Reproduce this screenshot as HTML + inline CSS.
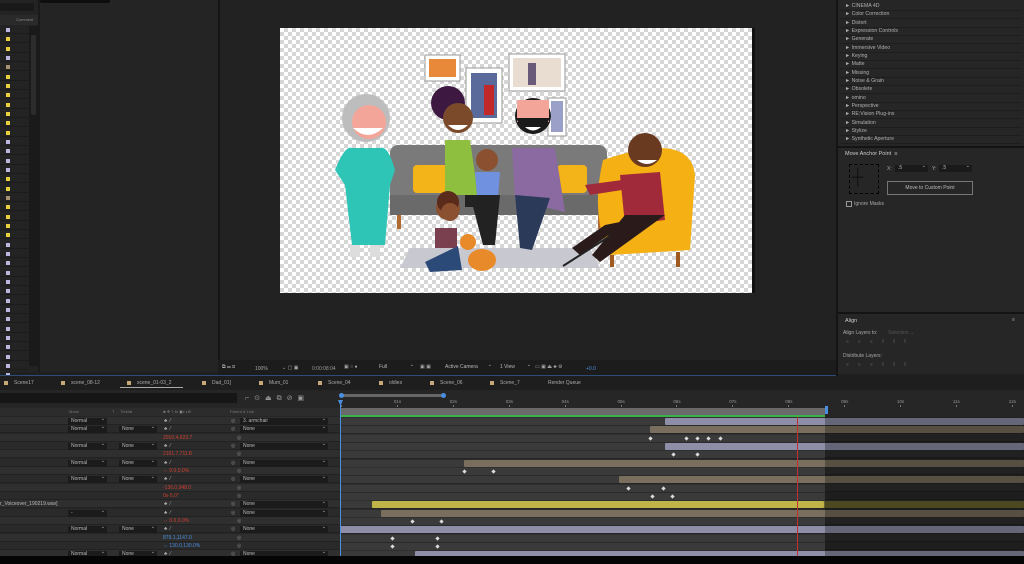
<!DOCTYPE html>
<html><head><meta charset="utf-8"><style>
*{margin:0;padding:0;box-sizing:border-box}
body{width:1024px;height:564px;background:#1f1f1f;position:relative;overflow:hidden;font-family:"Liberation Sans",sans-serif;color:#a8a8a8;font-size:5px}
.a{position:absolute}
.t{position:absolute;white-space:nowrap}
.row{position:absolute;left:0;width:340px;height:8px}
.dd{position:absolute;height:7px;background:#1b1b1b;color:#b8b8b8;font-size:5px;line-height:7px;padding-left:3px}
.dd:after{content:"⌄";position:absolute;right:2px;top:-2px;font-size:5px}
.bar{position:absolute;height:7px;border-radius:1px}
.k{position:absolute;width:3px;height:3px;background:#ddd;transform:rotate(45deg)}
.fx{position:absolute;left:845px;font-size:5.2px;color:#b0b0b0}
</style></head><body>

<!-- Project panel -->
<div class="a" style="left:0;top:0;width:38px;height:372px;background:#232323"></div>
<div class="a" style="left:0;top:3px;width:34px;height:8px;background:#191919;border-radius:2px"></div>
<div class="a" style="left:0;top:15px;width:38px;height:10px;background:#2a2a2a"></div>
<div class="t" style="left:16px;top:17px;font-size:4px;color:#888">Comment</div>
<div class="a" style="left:29px;top:26px;width:9px;height:340px;background:#1a1a1a"></div>
<div class="a" style="left:31px;top:35px;width:5px;height:80px;background:#2c2c2c;border-radius:2px"></div>
<div id="sq"></div>
<!-- mid empty panel -->
<div class="a" style="left:38px;top:0;width:180px;height:372px;background:#242424;border-left:2px solid #1a1a1a"></div>
<div class="a" style="left:40px;top:0;width:70px;height:3px;background:#0e0e0e;border-radius:0 0 2px 2px"></div>
<!-- Viewer -->
<div class="a" style="left:218px;top:0;width:618px;height:360px;background:#222;border-left:2px solid #151515"></div>
<div class="a" style="left:280px;top:28px;width:472px;height:265px;background-color:#fff;background-image:linear-gradient(45deg,#d6d6d6 25%,transparent 25%,transparent 75%,#d6d6d6 75%),linear-gradient(45deg,#d6d6d6 25%,transparent 25%,transparent 75%,#d6d6d6 75%);background-size:8px 8px;background-position:0 0,4px 4px"></div>
<svg class="a" style="left:280px;top:28px" width="472" height="265" viewBox="280 28 472 265">
 <!-- frames -->
 <rect x="425" y="55" width="35" height="26" fill="#fff" stroke="#999"/><rect x="429" y="59" width="27" height="18" fill="#e8893a"/>
 <rect x="466" y="68" width="36" height="55" fill="#fff" stroke="#999"/><rect x="471" y="73" width="26" height="45" fill="#5a6a9a"/><rect x="484" y="85" width="10" height="30" fill="#c0282a"/>
 <rect x="509" y="54" width="56" height="37" fill="#fff" stroke="#999"/><rect x="513" y="58" width="48" height="29" fill="#e8ddd0"/><rect x="528" y="63" width="8" height="22" fill="#6a5a7a"/>
 <rect x="548" y="98" width="18" height="38" fill="#fff" stroke="#999"/><rect x="551" y="101" width="12" height="31" fill="#9aa0c8"/>
 <!-- rug -->
 <polygon points="410,248 590,248 600,268 400,268" fill="#c8c8d0"/>
 <!-- sofa -->
 <rect x="390" y="145" width="217" height="70" rx="8" fill="#7a7a7a"/>
 <rect x="390" y="195" width="217" height="20" fill="#6a6a6a"/>
 <rect x="413" y="165" width="40" height="28" rx="4" fill="#f2b418"/>
 <rect x="557" y="165" width="30" height="28" rx="4" fill="#f2b418"/>
 <rect x="397" y="215" width="4" height="14" fill="#b06a30"/><rect x="598" y="215" width="4" height="14" fill="#b06a30"/>
 <!-- grandma -->
 <circle cx="366" cy="118" r="24" fill="#bdbdbd"/><circle cx="369" cy="122" r="17" fill="#f4a59a"/>
 <path d="M353 128 Q368 142 383 128" fill="#fff"/>
 <path d="M352 148 Q345 145 335 170 L345 185 L352 245 L385 245 L390 185 L395 170 Q388 145 380 148 Z" fill="#2ec4b6"/>
 <rect x="350" y="245" width="10" height="12" fill="#ddd"/><rect x="370" y="245" width="10" height="12" fill="#ddd"/>
 <!-- mom -->
 <circle cx="448" cy="103" r="17" fill="#3d1840"/><circle cx="458" cy="118" r="15" fill="#7a4a2a"/>
 <path d="M448 125 Q458 135 468 125" fill="#fff"/>
 <path d="M445 140 L470 140 L478 195 L445 195 Z" fill="#8fbf3f"/>
 <rect x="465" y="195" width="28" height="12" fill="#222"/>
 <!-- dad -->
 <circle cx="533" cy="116" r="18" fill="#1a1a1a"/><rect x="517" y="100" width="32" height="22" fill="#f4a59a"/>
 <path d="M516 118 Q533 150 550 118 Z" fill="#1a1a1a"/><path d="M525 127 Q533 134 541 127" fill="#fff"/>
 <path d="M512 148 L555 148 L565 212 L515 200 Z" fill="#8a6aa0"/>
 <path d="M515 195 L550 198 L532 250 L520 248 Z" fill="#2c3a5a"/>
 <!-- child on lap -->
 <circle cx="487" cy="160" r="11" fill="#8a5030"/><path d="M475 172 L500 172 L498 197 L477 197 Z" fill="#7090e0"/>
 <path d="M470 195 L500 195 L495 245 L483 245 Z" fill="#222"/>
 <!-- boy front -->
 <circle cx="448" cy="208" r="12" fill="#8a5030"/><circle cx="448" cy="202" r="11" fill="#5a2a1a"/><circle cx="450" cy="212" r="9" fill="#8a5030"/>
 <rect x="435" y="228" width="22" height="20" fill="#7a4050"/><path d="M425 262 L458 246 L462 270 L430 272 Z" fill="#2c4a78"/>
 <!-- cat -->
 <circle cx="468" cy="242" r="8" fill="#e88a2a"/><ellipse cx="482" cy="260" rx="14" ry="11" fill="#e88a2a"/>
 <!-- chair -->
 <path d="M603 160 Q690 130 695 175 L690 250 L610 255 Q590 215 603 160 Z" fill="#f5b014"/>
 <rect x="610" y="255" width="4" height="12" fill="#a05a20"/><rect x="676" y="252" width="4" height="15" fill="#a05a20"/>
 <!-- grandpa -->
 <circle cx="645" cy="150" r="17" fill="#6a3a20"/><path d="M637 160 Q647 168 657 160" fill="#fff"/>
 <path d="M620 175 L660 172 L665 220 L625 225 Z" fill="#a02a3a"/><path d="M585 185 L622 180 L622 190 L590 195 Z" fill="#a02a3a"/>
 <path d="M625 215 L665 215 L600 262 L592 255 Z" fill="#2a1a1a"/><path d="M605 225 L630 220 L580 255 L572 248 Z" fill="#2a1a1a"/>
 <line x1="563" y1="266" x2="610" y2="236" stroke="#222" stroke-width="2"/>
</svg>
<div class="a" style="left:752px;top:28px;width:3px;height:265px;background:#111"></div>

<!-- viewer toolbar -->
<div class="a" style="left:218px;top:360px;width:618px;height:15px;background:#1c1c1c"></div>
<div class="t" style="left:222px;top:364px;color:#bbb">⧉ ▭ ⊡</div>
<div class="t" style="left:255px;top:366px">100%</div><div class="t" style="left:282px;top:365px">⌄ ▢ ▣</div>
<div class="t" style="left:312px;top:366px;color:#999">0:00:08:04</div>
<div class="t" style="left:344px;top:364px">▣ ○ ●</div>
<div class="dd" style="left:376px;top:364px;width:40px;background:#1c1c1c">Full</div>
<div class="t" style="left:420px;top:364px">▣ ▣</div>
<div class="dd" style="left:442px;top:364px;width:52px;background:#1c1c1c">Active Camera</div>
<div class="dd" style="left:497px;top:364px;width:36px;background:#1c1c1c">1 View</div>
<div class="t" style="left:535px;top:364px">▭ ▣ ⏏ ♣ ⚙</div><div class="t" style="left:586px;top:366px;color:#4a8fe0">+0.0</div>
<div class="a" style="left:0;top:375px;width:836px;height:1px;background:#2b4d78"></div>

<!-- right panel -->
<div class="a" style="left:838px;top:0;width:186px;height:146px;background:#262626"></div>
<div id="fxl"></div>
<div class="a" style="left:838px;top:146px;width:186px;height:166px;background:#262626;border-top:2px solid #141414"></div>
<div class="t" style="left:845px;top:151px;font-size:5.5px;color:#ccc">Move Anchor Point &nbsp;≡</div>
<div class="a" style="left:849px;top:164px;width:30px;height:30px;border:1px dashed #000"></div>
<div class="t" style="left:852px;top:166px;font-size:16px;color:#111;line-height:24px">┼</div>
<div class="t" style="left:887px;top:166px">X:</div><div class="dd" style="left:895px;top:165px;width:33px;background:#1a1a1a">.5</div>
<div class="t" style="left:932px;top:166px">Y:</div><div class="dd" style="left:939px;top:165px;width:33px;background:#1a1a1a">.5</div>
<div class="a" style="left:887px;top:181px;width:86px;height:14px;border:1px solid #777;color:#bbb;text-align:center;line-height:12px">Move to Custom Point</div>
<div class="a" style="left:846px;top:201px;width:6px;height:6px;border:1px solid #999"></div>
<div class="t" style="left:854px;top:201px">Ignore Masks</div>
<div class="a" style="left:838px;top:312px;width:186px;height:62px;background:#262626;border-top:2px solid #141414"></div>
<div class="t" style="left:845px;top:318px;font-size:5.5px;color:#ccc">Align</div><div class="t" style="left:1012px;top:317px">≡</div>
<div class="t" style="left:843px;top:330px">Align Layers to:</div><div class="t" style="left:888px;top:330px;color:#555">Selection ⌄</div>
<div class="t" style="left:846px;top:339px;color:#555;letter-spacing:9px">≡≡≡‖‖‖</div>
<div class="t" style="left:843px;top:353px">Distribute Layers:</div>
<div class="t" style="left:846px;top:362px;color:#555;letter-spacing:9px">≡≡≡‖‖‖</div>
<div class="a" style="left:836px;top:0;width:2px;height:376px;background:#141414"></div>

<!-- tabs -->
<div class="a" style="left:0;top:376px;width:1024px;height:14px;background:#1e1e1e"></div>
<div id="tabs"></div>
<div class="a" style="left:120px;top:387px;width:63px;height:1px;background:#aaa"></div>

<!-- timeline -->
<div class="a" style="left:0;top:390px;width:1024px;height:166px;background:#262626"></div>
<div class="a" style="left:0;top:393px;width:237px;height:10px;background:#161616"></div>
<div class="t" style="left:245px;top:394px;font-size:7px;color:#999;letter-spacing:5px">⌐⊙⏏⧉⊘▣</div>
<div class="a" style="left:340px;top:394px;width:103px;height:3px;background:#666"></div>
<div class="a" style="left:339px;top:393px;width:5px;height:5px;border-radius:3px;background:#4a8fe0"></div>
<div class="a" style="left:441px;top:393px;width:5px;height:5px;border-radius:3px;background:#4a8fe0"></div>
<div class="a" style="left:0;top:408px;width:340px;height:8px;background:#2c2c2c"></div>
<div class="t" style="left:69px;top:409px;font-size:4px;color:#777">Mode</div>
<div class="t" style="left:112px;top:409px;font-size:4px;color:#777">T</div>
<div class="t" style="left:120px;top:409px;font-size:4px;color:#777">TrkMat</div>
<div class="t" style="left:163px;top:409px;font-size:4px;color:#888">♣ ✣ ∖ fx ▣◐◑⊘</div>
<div class="t" style="left:230px;top:409px;font-size:4px;color:#777">Parent &amp; Link</div>
<div id="ruler"></div>
<div class="a" style="left:340px;top:408px;width:485px;height:7px;background:#6a6a6a"></div>
<div class="a" style="left:340px;top:415px;width:485px;height:2px;background:#3cb04a"></div>
<div class="a" style="left:825px;top:406px;width:3px;height:8px;background:#4a8fe0"></div>
<div id="rows"></div>
<div class="a" style="left:825px;top:417px;width:199px;height:139px;background:rgba(0,0,0,0.28)"></div>
<div class="a" style="left:797px;top:417px;width:1px;height:139px;background:#c03030"></div>
<div class="a" style="left:340px;top:400px;width:1px;height:156px;background:#4a8fe0"></div>
<div class="a" style="left:338px;top:400px;width:5px;height:6px;background:#4a8fe0;clip-path:polygon(0 0,100% 0,50% 100%)"></div>
<div class="a" style="left:0;top:556px;width:1024px;height:8px;background:#050505"></div>

<script>
// project squares
var cols=['#b8b8e0','#e8d040','#e8d040','#b8b8e0','#a89070','#e8d040','#e8d040','#e8d040','#e8d040','#e8d040','#e8d040','#e8d040','#b8b8e0','#b8b8e0','#b8b8e0','#b8b8e0','#e8d040','#e8d040','#a89070','#e8d040','#e8d040','#e8d040','#e8d040','#b8b8e0','#b8b8e0','#b8b8e0','#b8b8e0','#b8b8e0','#b8b8e0','#b8b8e0','#b8b8e0','#b8b8e0','#b8b8e0','#b8b8e0','#b8b8e0','#b8b8e0','#b8b8e0','#b8b8e0'];
var h='';cols.forEach(function(c,i){h+='<div class="a" style="left:6px;top:'+(28+i*9.33)+'px;width:4px;height:4px;background:'+c+'"></div><div class="a" style="left:0;top:'+(33+i*9.33)+'px;width:29px;height:1px;background:#1c1c1c"></div>'});
document.getElementById('sq').outerHTML=h;
// effects list
var fx=['CINEMA 4D','Color Correction','Distort','Expression Controls','Generate','Immersive Video','Keying','Matte','Missing','Noise & Grain','Obsolete','omino','Perspective','RE:Vision Plug-ins','Simulation','Stylize','Synthetic Aperture'];
h='';fx.forEach(function(f,i){h+='<div class="fx" style="top:'+(3+i*8.33)+'px">► '+f+'</div><div class="a" style="left:840px;top:'+(10+i*8.33)+'px;width:182px;height:1px;background:#1e1e1e"></div>'});
document.getElementById('fxl').outerHTML=h;
// tabs
var tabs=[[14,'Scene17'],[71,'scene_08-12'],[137,'scene_01-03_2'],[212,'Dad_01]'],[269,'Mum_01'],[328,'Scene_04'],[389,'oldies'],[440,'Scene_06'],[500,'Scene_7']];
h='';tabs.forEach(function(t){h+='<div class="a" style="left:'+(t[0]-10)+'px;top:381px;width:4px;height:4px;background:#c8a878"></div><div class="t" style="left:'+t[0]+'px;top:380px;color:#aaa;font-size:5px">'+t[1]+'</div>'});
h+='<div class="t" style="left:548px;top:380px;color:#aaa;font-size:5px">Render Queue</div>';
document.getElementById('tabs').outerHTML=h;
// ruler
h='';['0s','01s','02s','03s','04s','05s','06s','07s','08s','09s','10s','11s','12s'].forEach(function(s,i){var x=341+i*55.9;h+='<div class="t" style="left:'+(x-3)+'px;top:399px;font-size:4.5px;color:#999">'+(i?s:'')+'</div><div class="a" style="left:'+x+'px;top:405px;width:1px;height:2px;background:#777"></div>'});
document.getElementById('ruler').outerHTML=h;
// rows
var P='#8e8ea8',T='#7a6e5e';
var rows=[
 {m:'Normal',tm:0,par:'3. armchair',b:[665,P]},
 {m:'Normal',tm:1,par:'None',b:[650,T]},
 {v:'2010.4,623.7',vc:'#d04030',k:[650,686,697,708,720]},
 {m:'Normal',tm:1,par:'None',b:[665,P]},
 {v:'2101.7,711.8',vc:'#d04030',k:[673,697]},
 {m:'Normal',tm:1,par:'None',b:[464,T]},
 {v:'⇔ 0.0,0.0%',vc:'#d04030',k:[464,493]},
 {m:'Normal',tm:1,par:'None',b:[619,T]},
 {v:'-136.0,948.0',vc:'#d04030',k:[628,663]},
 {v:'0x-5.0°',vc:'#d04030',k:[652,672]},
 {name:'r_Voiceover_190219.wav]',par:'None',b:[372,'#c0b448',824]},
 {m:'-',par:'None',b:[381,T]},
 {v:'⇔ 0.0,0.0%',vc:'#d04030',k:[412,441]},
 {m:'Normal',tm:1,par:'None',b:[340,P]},
 {v:'879.1,1147.0',vc:'#4a8fe0',k:[392,437]},
 {v:'⇔ 130.0,130.0%',vc:'#4a8fe0',k:[392,437]},
 {m:'Normal',tm:1,par:'None',b:[415,P]}];
h='';rows.forEach(function(r,i){var y=417+i*8.33;
 h+='<div class="a" style="left:0;top:'+y+'px;width:1024px;height:8px;background:'+(i%2?'#2a2a2a':'#2f2f2f')+';border-bottom:1px solid #222"></div>';
 h+='<div class="a" style="left:340px;top:'+(y+1)+'px;width:485px;height:7px;background:#3a3a3a"></div>';
 if(r.name)h+='<div class="t" style="left:0;top:'+(y+1)+'px;color:#bbb">'+r.name+'</div>';
 if(r.m)h+='<div class="dd" style="left:68px;top:'+(y+1)+'px;width:39px">'+r.m+'</div>';
 if(r.tm)h+='<div class="dd" style="left:119px;top:'+(y+1)+'px;width:38px">None</div>';
 if(r.m||r.name)h+='<div class="t" style="left:164px;top:'+(y+1)+'px;color:#aaa">♣ &nbsp;⁄</div><div class="t" style="left:231px;top:'+(y+1)+'px;color:#888">◎</div>';
 if(r.par)h+='<div class="dd" style="left:240px;top:'+(y+1)+'px;width:88px">'+r.par+'</div>';
 if(r.v)h+='<div class="t" style="left:163px;top:'+(y+1)+'px;color:'+r.vc+'">'+r.v+'</div><div class="t" style="left:237px;top:'+(y+1)+'px;color:#888">◎</div>';
 if(r.b){var e=r.b[2]||1024;h+='<div class="bar" style="left:'+r.b[0]+'px;top:'+(y+1)+'px;width:'+(e-r.b[0])+'px;background:'+r.b[1]+'"></div>';
   if(r.b[2])h+='<div class="bar" style="left:'+e+'px;top:'+(y+1)+'px;width:'+(1024-e)+'px;background:#6a6430"></div>';}
 if(r.k)r.k.forEach(function(x){h+='<div class="k" style="left:'+(x-1)+'px;top:'+(y+3)+'px"></div>'});
});
document.getElementById('rows').outerHTML=h;
</script>
</body></html>
